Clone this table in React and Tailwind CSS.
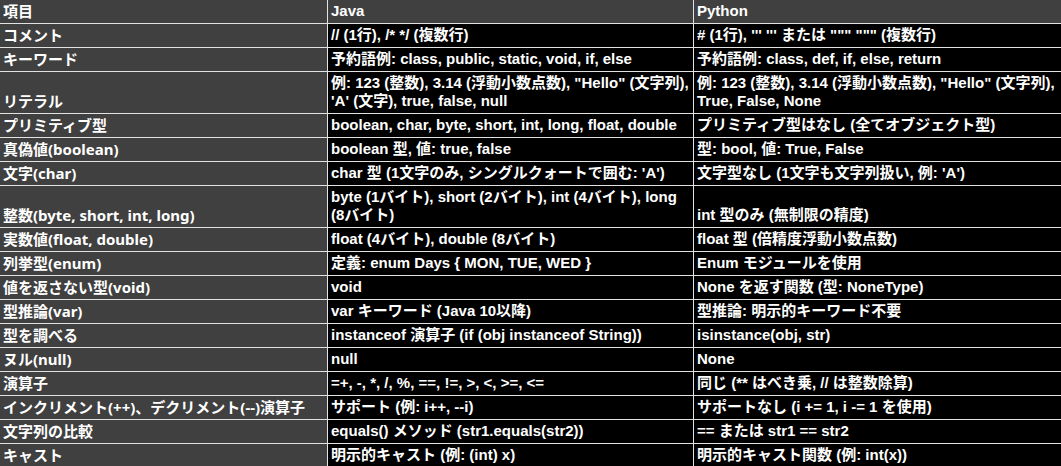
const rows = [
  ["コメント", "// (1行), /* */ (複数行)", "# (1行), ''' ''' または \"\"\" \"\"\" (複数行)"],
  ["キーワード", "予約語例: class, public, static, void, if, else", "予約語例: class, def, if, else, return"],
  [
    "リテラル",
    ["例: 123 (整数), 3.14 (浮動小数点数), \"Hello\" (文字列),", "'A' (文字), true, false, null"],
    ["例: 123 (整数), 3.14 (浮動小数点数), \"Hello\" (文字列),", "True, False, None"],
  ],
  ["プリミティブ型", "boolean, char, byte, short, int, long, float, double", "プリミティブ型はなし (全てオブジェクト型)"],
  ["真偽値(boolean)", "boolean 型, 値: true, false", "型: bool, 値: True, False"],
  ["文字(char)", "char 型 (1文字のみ, シングルクォートで囲む: 'A')", "文字型なし (1文字も文字列扱い, 例: 'A')"],
  [
    "整数(byte, short, int, long)",
    ["byte (1バイト), short (2バイト), int (4バイト), long", "(8バイト)"],
    "int 型のみ (無制限の精度)",
  ],
  ["実数値(float, double)", "float (4バイト), double (8バイト)", "float 型 (倍精度浮動小数点数)"],
  ["列挙型(enum)", "定義: enum Days { MON, TUE, WED }", "Enum モジュールを使用"],
  ["値を返さない型(void)", "void", "None を返す関数 (型: NoneType)"],
  ["型推論(var)", "var キーワード (Java 10以降)", "型推論: 明示的キーワード不要"],
  ["型を調べる", "instanceof 演算子 (if (obj instanceof String))", "isinstance(obj, str)"],
  ["ヌル(null)", "null", "None"],
  ["演算子", "=+, -, *, /, %, ==, !=, >, <, >=, <=", "同じ (** はべき乗, // は整数除算)"],
  ["インクリメント(++)、デクリメント(--)演算子", "サポート (例: i++, --i)", "サポートなし (i += 1, i -= 1 を使用)"],
  ["文字列の比較", "equals() メソッド (str1.equals(str2))", "== または str1 == str2"],
  ["キャスト", "明示的キャスト (例: (int) x)", "明示的キャスト関数 (例: int(x))"],
];

const labelFont = "font-['Noto_Sans','Noto_Sans_CJK_JP',sans-serif]";
const codeFont = "font-['Liberation_Sans','Noto_Sans_CJK_JP',sans-serif]";

function Cell({ children, dark, font }) {
  const lines = Array.isArray(children) ? children : [children];
  return (
    <div
      className={`flex flex-col justify-end pl-[3px] pt-[2px] pb-[3px] whitespace-nowrap overflow-hidden ${font} ${
        dark ? "bg-[#404040]" : "bg-black"
      }`}
    >
      {lines.map((line, i) => (
        <div key={i}>{line}</div>
      ))}
    </div>
  );
}

export default function App() {
  return (
    <div className="w-[1061px] h-[466px] overflow-hidden bg-black">
      <div className="grid grid-cols-[327px_365px_1fr] gap-px bg-[#e2e2e2] text-[15px] leading-[18px] font-bold text-white">
        <Cell dark font={labelFont}>項目</Cell>
        <Cell dark font={codeFont}>Java</Cell>
        <Cell dark font={codeFont}>Python</Cell>
        {rows.map(([label, java, python]) => (
          <div key={label} className="contents">
            <Cell dark font={labelFont}>{label}</Cell>
            <Cell font={codeFont}>{java}</Cell>
            <Cell font={codeFont}>{python}</Cell>
          </div>
        ))}
      </div>
    </div>
  );
}
